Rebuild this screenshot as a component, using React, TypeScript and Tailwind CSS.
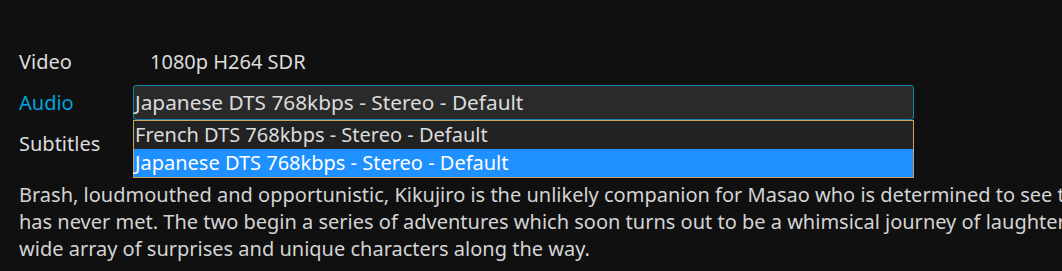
import { useState } from "react";

const tracks = [
  "French DTS 768kbps - Stereo - Default",
  "Japanese DTS 768kbps - Stereo - Default",
];

const overviewLines = [
  "Brash, loudmouthed and opportunistic, Kikujiro is the unlikely companion for Masao who is determined to see the mother he",
  "has never met. The two begin a series of adventures which soon turns out to be a whimsical journey of laughter and tears with a",
  "wide array of surprises and unique characters along the way.",
];

export default function App() {
  const [selected, setSelected] = useState(1);

  return (
    <div
      className="w-[1062px] h-[271px] overflow-hidden bg-[#101010] text-[#dcdcdc] text-[20px]"
      style={{ fontFamily: '"Noto Sans", sans-serif' }}
    >
      <div className="pl-[19px] pt-[45px]">
        <div className="flex flex-col gap-[6px]">
          <div className="flex items-center h-[34px]">
            <div className="w-[114px]">Video</div>
            <div className="ml-[17px]">1080p H264 SDR</div>
          </div>

          <div className="flex items-center h-[35px]">
            <div className="w-[114px] text-[#00a4dc]">Audio</div>
            <div className="relative w-[781px] h-[35px]">
              <div className="h-full flex items-center pl-[1px] bg-[#2a2a2a] border border-[#1684ad] rounded-[3px] text-[20.8px]">
                {tracks[selected]}
              </div>
              <ul className="absolute left-0 top-full w-full bg-[#222222] border border-[#c9a45e] z-10">
                {tracks.map((t, i) => (
                  <li
                    key={t}
                    onClick={() => setSelected(i)}
                    className={
                      i === selected
                        ? "h-[28px] flex items-center pl-[1px] bg-[#1e90ff] text-white"
                        : "h-[28px] flex items-center pl-[1px]"
                    }
                  >
                    {t}
                  </li>
                ))}
              </ul>
            </div>
          </div>

          <div className="flex items-center h-[35px]">
            <div className="w-[114px]">Subtitles</div>
          </div>
        </div>

        <p className="mt-[20px] leading-[27px] text-[#d4d4d4] whitespace-nowrap">
          {overviewLines.map((line, i) => (
            <span key={i} className="block">
              {line}
            </span>
          ))}
        </p>
      </div>
    </div>
  );
}
